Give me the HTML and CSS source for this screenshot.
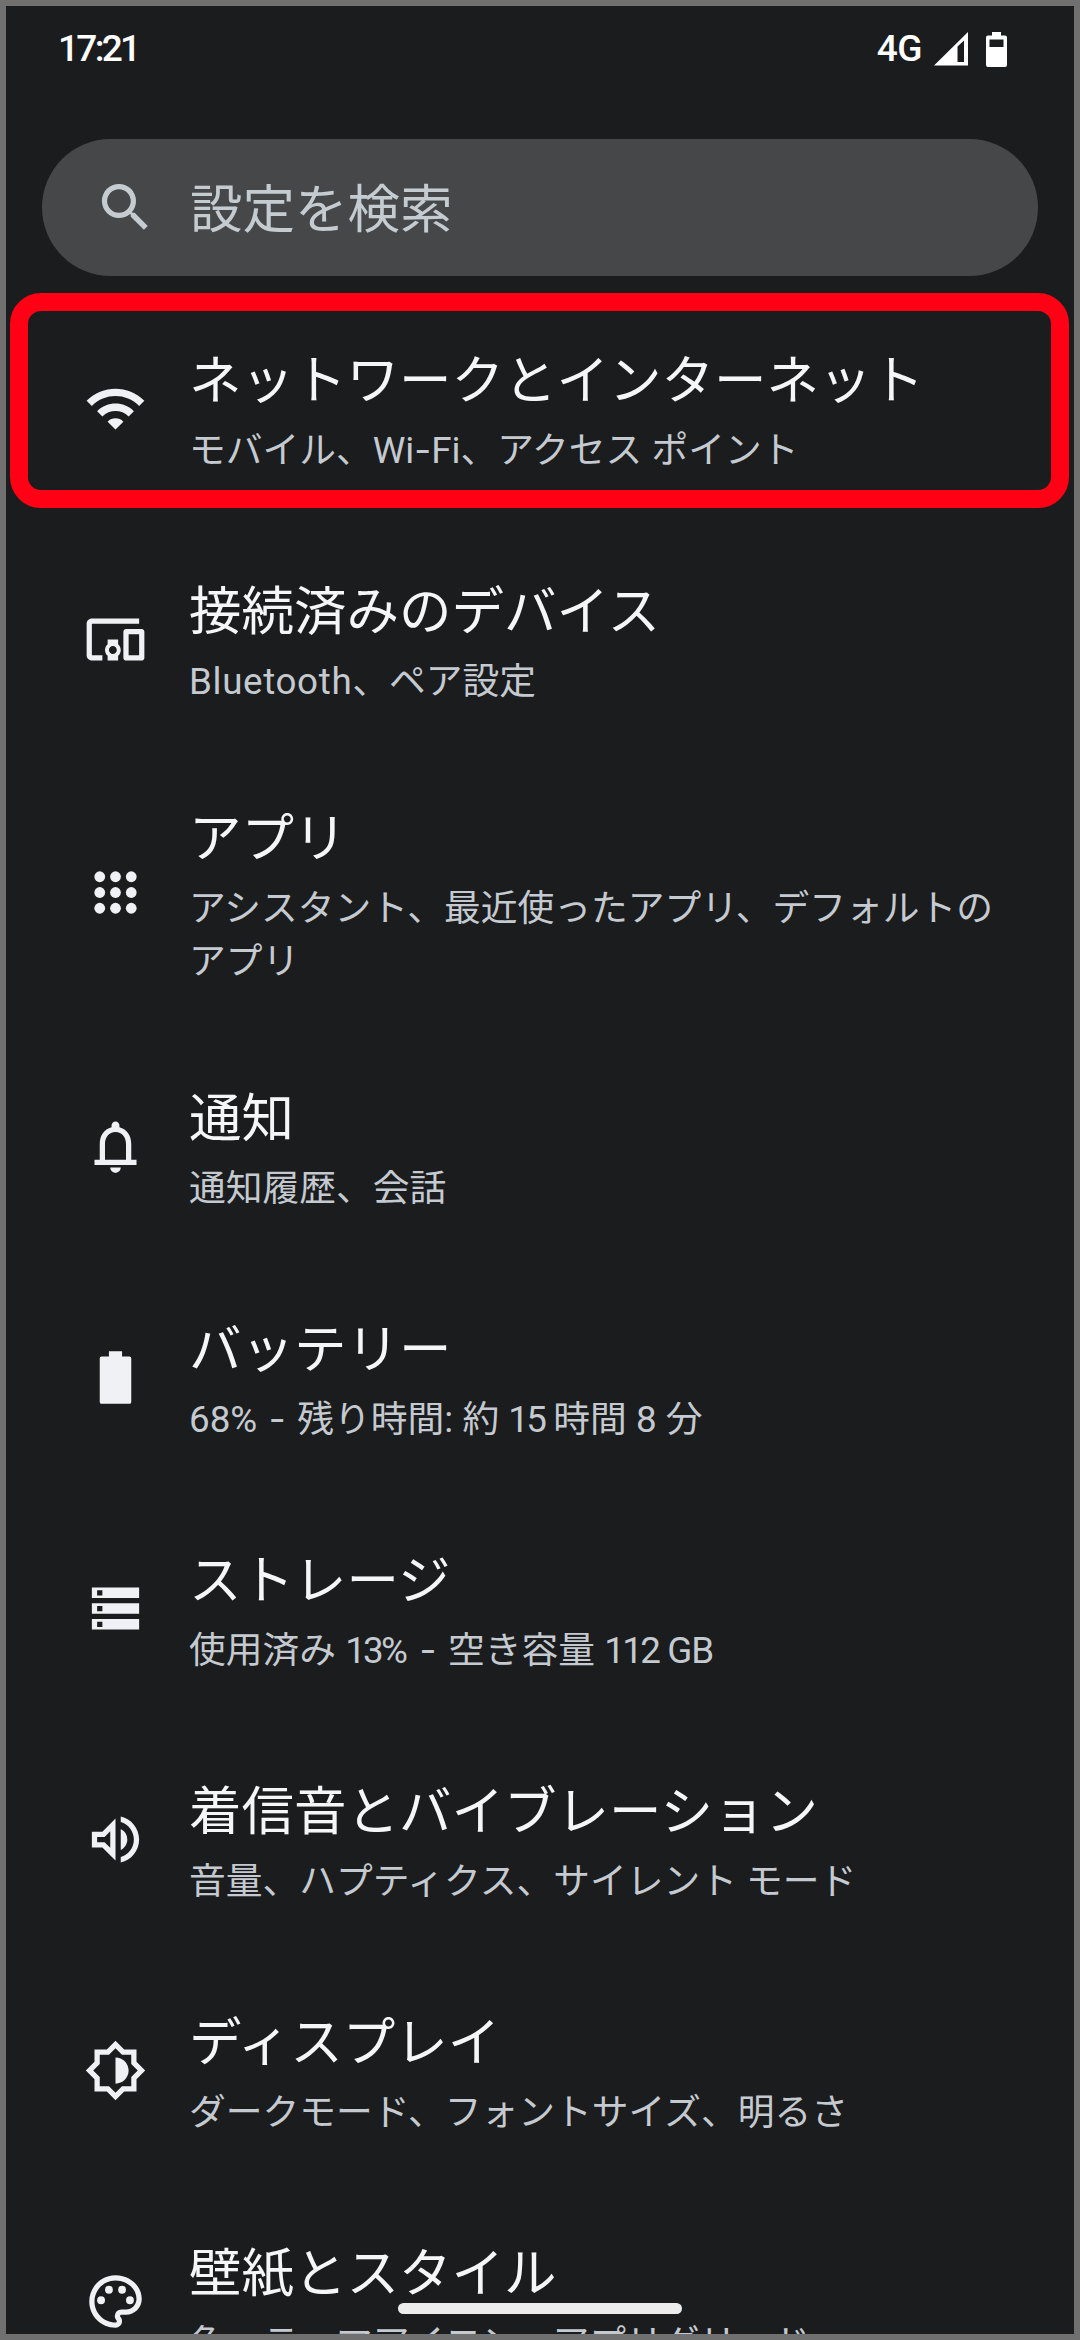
FILE: index.html
```html
<!DOCTYPE html>
<html lang="ja">
<head>
<meta charset="utf-8">
<title>設定</title>
<link rel="stylesheet" href="styles.css">
</head>
<body>
<div class="screen">
  <header class="status">
    <span class="clock">17:21</span>
    <div class="status-icons">
      <span class="net">4G</span>
      <svg class="signal" viewBox="0 0 34 34"><path fill-rule="evenodd" d="M0 33.5 34 0V33.5ZM23.5 14.5V30H30V8.5Z"/></svg>
      <svg class="charge" viewBox="0 0 21 35"><path fill-rule="evenodd" d="M6 0H15V3.500H19Q21 3.500 21 5.500V33Q21 35 19 35H2Q0 35 0 33V5.500Q0 3.500 2 3.500H6ZM3.500 7.500V15H17.500V7.500Z"/></svg>
    </div>
  </header>

  <div class="search">
    <svg class="icon" viewBox="0 0 24 24"><path d="M15.5 14h-.79l-.28-.27A6.47 6.47 0 0 0 16 9.500 6.500 6.500 0 1 0 9.500 16c1.610 0 3.090-.59 4.230-1.570l.27.28v.79l5 4.990L20.490 19l-4.990-5zm-6 0C7.010 14 5 11.990 5 9.500S7.010 5 9.500 5 14 7.010 14 9.500 11.990 14 9.500 14z"/></svg>
    <span class="hint">設定を検索</span>
  </div>

  <main class="list">
    <section class="row">
      <svg class="icon" viewBox="0 0 24 24"><path d="M1 9l2 2c4.970-4.970 13.030-4.970 18 0l2-2C16.930 2.930 7.080 2.930 1 9zm8 8l3 3 3-3c-1.650-1.660-4.340-1.660-6 0zm-4-4l2 2c2.760-2.760 7.240-2.760 10 0l2-2C15.140 9.140 8.870 9.140 5 13z"/></svg>
      <div class="text"><h2>ネットワークとインターネット</h2><p>モバイル、Wi<span class="hyphen">-</span>Fi、アクセス ポイント</p></div>
      <div class="highlight"></div>
    </section>
    <section class="row">
      <svg class="icon" viewBox="0 0 24 24"><path d="M3 6h18V4H3c-1.100 0-2 .9-2 2v12c0 1.100.9 2 2 2h4v-2H3V6zm10 6H9v1.780c-.61.55-1 1.330-1 2.220s.39 1.670 1 2.220V20h4v-1.780c.61-.55 1-1.340 1-2.220s-.39-1.670-1-2.220V12zm-2 5.500c-.83 0-1.500-.67-1.500-1.500s.67-1.500 1.500-1.500 1.500.67 1.500 1.500-.67 1.500-1.500 1.500zM22 8h-6c-.5 0-1 .5-1 1v10c0 .5.5 1 1 1h6c.5 0 1-.5 1-1V9c0-.5-.5-1-1-1zm-1 10h-4v-8h4v8z"/></svg>
      <div class="text"><h2>接続済みのデバイス</h2><p><span class="wide">Bluetooth</span>、ペア設定</p></div>
    </section>
    <section class="row tall">
      <svg class="icon" viewBox="0 0 24 24"><circle cx="6" cy="6" r="2.050"/><circle cx="12" cy="6" r="2.050"/><circle cx="18" cy="6" r="2.050"/><circle cx="6" cy="12" r="2.050"/><circle cx="12" cy="12" r="2.050"/><circle cx="18" cy="12" r="2.050"/><circle cx="6" cy="18" r="2.050"/><circle cx="12" cy="18" r="2.050"/><circle cx="18" cy="18" r="2.050"/></svg>
      <div class="text"><h2>アプリ</h2><p>アシスタント、最近使ったアプリ、デフォルトの<br>アプリ</p></div>
    </section>
    <section class="row">
      <svg class="icon" viewBox="0 0 24 24"><path d="M12 22c1.100 0 2-.9 2-2h-4c0 1.100.9 2 2 2zM18 17v-6c0-3.070-1.630-5.640-4.500-6.320V4c0-.83-.67-1.500-1.500-1.500s-1.500.67-1.500 1.500v.68C7.640 5.360 6 7.920 6 11v6H4v2h16v-2h-2zm-2 0H8v-6c0-2.480 1.510-4.500 4-4.500s4 2.020 4 4.500v6z"/></svg>
      <div class="text"><h2>通知</h2><p>通知履歴、会話</p></div>
    </section>
    <section class="row">
      <svg class="icon" viewBox="0 0 24 24"><path d="M9.500 2h5v2H17.300q.7 0 .7.700V21.300q0 .7-.7.700H6.700q-.7 0-.7-.7V4.700q0-.7.7-.7H9.500z"/></svg>
      <div class="text"><h2>バッテリー</h2><p>68% <span class="hyphen dash">-</span> 残り時間: 約 <span class="ones">15</span> 時間 8 分</p></div>
    </section>
    <section class="row">
      <svg class="icon" viewBox="0 0 24 24"><path fill-rule="evenodd" d="M3 4H21V8H3ZM5 5V7H7V5ZM3 10H21V14H3ZM5 11V13H7V11ZM3 16H21V20H3ZM5 17V19H7V17Z"/></svg>
      <div class="text"><h2>ストレージ</h2><p>使用済み <span class="ones">13</span>% <span class="hyphen dash">-</span> 空き容量 <span class="ones">112</span> <span class="tight">GB</span></p></div>
    </section>
    <section class="row">
      <svg class="icon" viewBox="0 0 24 24"><path fill-rule="evenodd" d="M3 9v6h4l5 5V4L7 9H3zm7-.17v6.340L7.830 13H5v-2h2.830L10 8.830zM14 7.970v8.050c1.480-.73 2.500-2.250 2.500-4.020A4.500 4.500 0 0 0 14 7.970zM14 3.230v2.060c2.890.86 5 3.540 5 6.710s-2.110 5.850-5 6.710v2.060c4.010-.91 7-4.490 7-8.770s-2.990-7.860-7-8.770z"/></svg>
      <div class="text"><h2>着信音とバイブレーション</h2><p>音量、ハプティクス、サイレント モード</p></div>
    </section>
    <section class="row">
      <svg class="icon" viewBox="0 0 24 24"><path d="M20 8.690V4h-4.690L12 .69 8.690 4H4v4.690L.69 12 4 15.310V20h4.690L12 23.310 15.310 20H20v-4.690L23.310 12 20 8.690zm-2 5.790V18h-3.520L12 20.480 9.520 18H6v-3.520L3.520 12 6 9.520V6h3.520L12 3.520 14.480 6H18v3.520L20.480 12 18 14.480zM12 7v10c2.760 0 5-2.240 5-5s-2.240-5-5-5z"/></svg>
      <div class="text"><h2>ディスプレイ</h2><p>ダークモード、フォントサイズ、明るさ</p></div>
    </section>
    <section class="row">
      <svg class="icon" viewBox="0 0 24 24"><path d="M12 22C6.490 22 2 17.510 2 12S6.490 2 12 2s10 4.040 10 9c0 3.310-2.690 6-6 6h-1.770c-.28 0-.5.22-.5.500 0 .12.05.23.13.33.41.47.64 1.060.64 1.670A2.500 2.500 0 0 1 12 22zm0-18c-4.410 0-8 3.590-8 8s3.590 8 8 8c.28 0 .5-.22.5-.5a.54.54 0 0 0-.14-.35c-.41-.46-.63-1.050-.63-1.650a2.500 2.500 0 0 1 2.500-2.500H16c2.210 0 4-1.790 4-4 0-3.860-3.590-7-8-7z"/><circle cx="6.500" cy="11.500" r="1.500"/><circle cx="9.500" cy="7.500" r="1.500"/><circle cx="14.500" cy="7.500" r="1.500"/><circle cx="17.500" cy="11.500" r="1.500"/></svg>
      <div class="text"><h2>壁紙とスタイル</h2><p>色、テーマアイコン、アプリグリッド</p></div>
    </section>
  </main>
  <div class="home-bar"></div>
</div>
</body>
</html>
```
FILE: styles.css
```css
* { box-sizing: border-box; }

body { margin: 0; background: #1b1c1e; }

.screen {
  position: relative;
  width: 1080px;
  height: 2340px;
  border: 6px solid #707070;
  background: #1b1c1e;
  color: #f5f6f7;
  overflow: hidden;
  font-family: Roboto, "Noto Sans CJK JP", sans-serif;
}

.status {
  display: flex;
  justify-content: space-between;
  align-items: center;
  height: 86px;
  padding: 0 67px 0 52px;
  color: #fff;
  font-size: 37px;
  line-height: 86px;
}

.clock { font-weight: 500; letter-spacing: -2.7px; }
.status-icons { display: flex; align-items: center; }
.net { font-weight: 500; letter-spacing: -.5px; margin-right: 12px; }
.signal { width: 34px; height: 34px; fill: #fff; margin-right: 18px; }
.charge { width: 21px; height: 35px; fill: #fff; }

.search {
  display: flex;
  align-items: center;
  gap: 33px;
  height: 137px;
  margin: 47px 36px 0;
  padding-left: 52px;
  border-radius: 69px;
  background: #464749;
  color: #c4cbd1;
  font-size: 52.5px;
}

.hint { padding-bottom: 6px; }

.icon { flex: none; width: 63px; height: 63px; fill: #f0f1f4; }
.search .icon { fill: #c4cbd1; }

.list { margin-top: 16.5px; }

.row {
  position: relative;
  display: flex;
  align-items: center;
  gap: 42px;
  height: 231px;
  padding-left: 78px;
}

.tall { height: 276px; }

.text { padding-top: 4px; white-space: nowrap; }

h2 {
  margin: 0 0 5px;
  font-size: 52.5px;
  font-weight: 400;
  line-height: 76px;
}

p {
  margin: 0;
  color: #c4cad0;
  font-size: 36.75px;
  line-height: 53px;
}

.hyphen { font-family: Inter, sans-serif; line-height: 1; }
.dash { margin: 0 2.5px; }
.wide { letter-spacing: .65px; }
.ones { letter-spacing: -2.7px; }
.tight { letter-spacing: -1px; }

.highlight {
  position: absolute;
  left: 4px;
  top: .5px;
  width: 1059px;
  height: 215px;
  border: 18.500px solid #ff0014;
  border-radius: 31px;
}

.home-bar {
  position: absolute;
  left: 392px;
  top: 2297px;
  width: 284px;
  height: 11px;
  border-radius: 6px;
  background: #ececec;
}
```
